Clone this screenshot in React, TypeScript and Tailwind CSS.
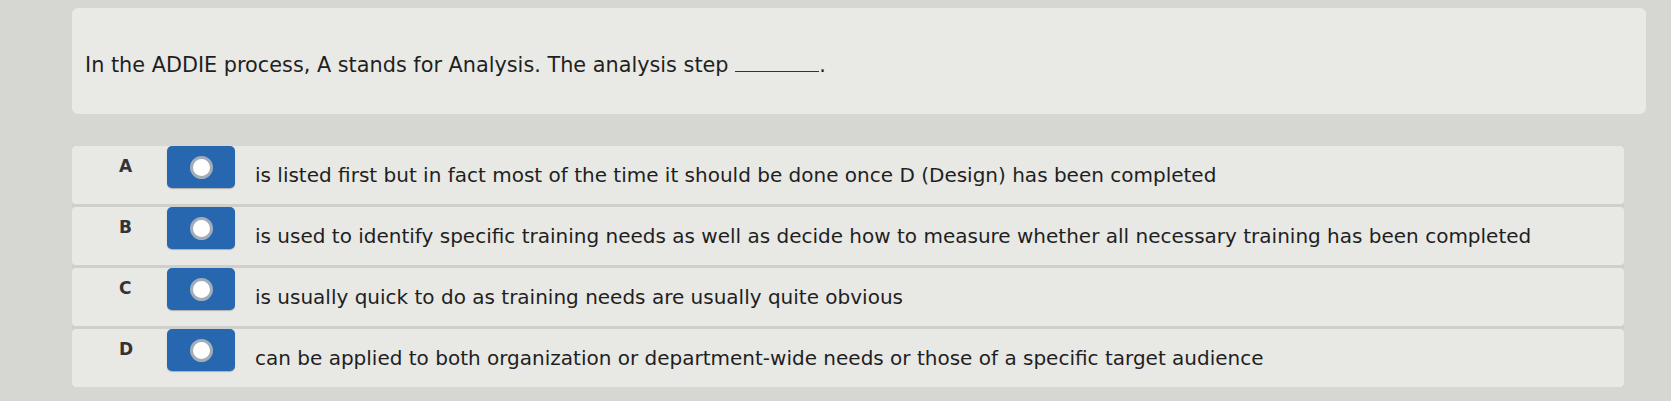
import React from "react";

const OPTIONS = [
  { key: "A", text: "is listed first but in fact most of the time it should be done once D (Design) has been completed" },
  { key: "B", text: "is used to identify specific training needs as well as decide how to measure whether all necessary training has been completed" },
  { key: "C", text: "is usually quick to do as training needs are usually quite obvious" },
  { key: "D", text: "can be applied to both organization or department-wide needs or those of a specific target audience" },
];

function RadioTile() {
  return (
    <div className="flex h-[42px] w-[68px] shrink-0 items-center justify-center rounded-[5px] bg-[#2667b0] shadow-[0_1px_1px_rgba(0,0,0,0.25)]">
      <div className="h-[23px] w-[23px] rounded-full border-[3px] border-[#a3adb9] bg-white" />
    </div>
  );
}

export default function App() {
  return (
    <div
      className="h-[401px] w-[1671px] overflow-hidden bg-[#d6d6d3] text-[#1f1f1f]"
      style={{ fontFamily: '"DejaVu Sans", Verdana, sans-serif' }}
    >
      <div className="flex flex-col pl-[72px] pr-[25px] pt-[8px]">
        {/* Question */}
        <div className="h-[106px] rounded-md bg-[#e9e9e6] px-[13px] pt-[44px]">
          <p className="text-[20.8px] leading-[26px]">
            In the ADDIE process, A stands for Analysis. The analysis step{" "}
            <span className="inline-block w-[84px] border-b border-[#333] align-baseline" />.
          </p>
        </div>

        {/* Options */}
        <div className="mt-[32px] mr-[22px] flex flex-col gap-[3px] bg-[#cfcfcc]">
          {OPTIONS.map((o) => (
            <div key={o.key} className="flex h-[58px] items-start rounded-sm bg-[#e8e8e5]">
              <span className="mt-[10px] w-[95px] pl-[47px] text-[17px] font-bold leading-5 text-[#333]">
                {o.key}
              </span>
              <RadioTile />
              <span className="ml-[20px] mt-[16px] text-[20px] leading-[26px]">{o.text}</span>
            </div>
          ))}
        </div>
      </div>
    </div>
  );
}
